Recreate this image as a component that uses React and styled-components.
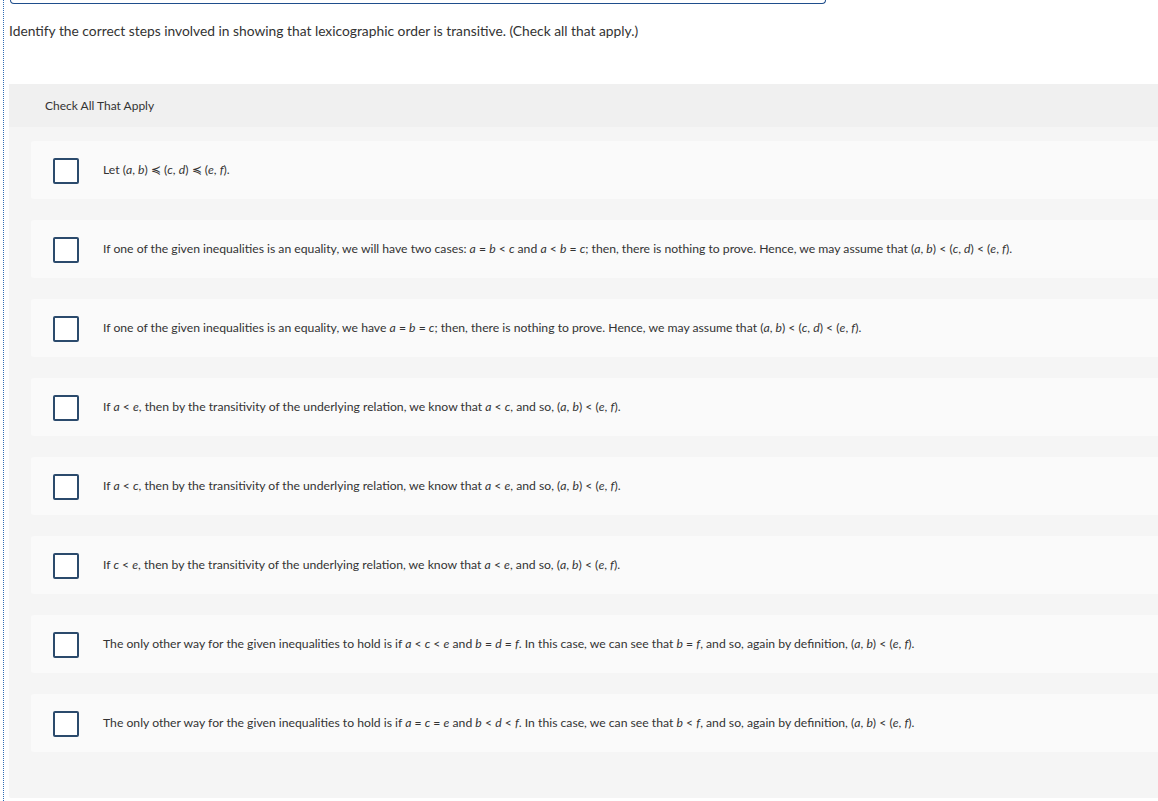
import styled, { createGlobalStyle } from 'styled-components';

const GlobalStyle = createGlobalStyle`
  html, body {
    margin: 0;
    padding: 0;
    background: #fff;
    overflow: hidden;
  }
  body {
    font-family: Lato, 'Open Sans', 'Liberation Sans', sans-serif;
    color: #333;
  }
`;

const V = styled.i`
  font-style: italic;
`;

const options = [
  <>Let (<V>a</V>, <V>b</V>) ≼ (<V>c</V>, <V>d</V>) ≼ (<V>e</V>, <V>f</V>).</>,
  <>
    If one of the given inequalities is an equality, we will have two cases: <V>a</V> = <V>b</V> &lt; <V>c</V> and{' '}
    <V>a</V> &lt; <V>b</V> = <V>c</V>; then, there is nothing to prove. Hence, we may assume that (<V>a</V>, <V>b</V>) &lt; (
    <V>c</V>, <V>d</V>) &lt; (<V>e</V>, <V>f</V>).
  </>,
  <>
    If one of the given inequalities is an equality, we have <V>a</V> = <V>b</V> = <V>c</V>; then, there is nothing to
    prove. Hence, we may assume that (<V>a</V>, <V>b</V>) &lt; (<V>c</V>, <V>d</V>) &lt; (<V>e</V>, <V>f</V>).
  </>,
  <>
    If <V>a</V> &lt; <V>e</V>, then by the transitivity of the underlying relation, we know that <V>a</V> &lt; <V>c</V>,
    and so, (<V>a</V>, <V>b</V>) &lt; (<V>e</V>, <V>f</V>).
  </>,
  <>
    If <V>a</V> &lt; <V>c</V>, then by the transitivity of the underlying relation, we know that <V>a</V> &lt; <V>e</V>,
    and so, (<V>a</V>, <V>b</V>) &lt; (<V>e</V>, <V>f</V>).
  </>,
  <>
    If <V>c</V> &lt; <V>e</V>, then by the transitivity of the underlying relation, we know that <V>a</V> &lt; <V>e</V>,
    and so, (<V>a</V>, <V>b</V>) &lt; (<V>e</V>, <V>f</V>).
  </>,
  <>
    The only other way for the given inequalities to hold is if <V>a</V> &lt; <V>c</V> &lt; <V>e</V> and <V>b</V> ={' '}
    <V>d</V> = <V>f</V>. In this case, we can see that <V>b</V> = <V>f</V>, and so, again by definition, (<V>a</V>,{' '}
    <V>b</V>) &lt; (<V>e</V>, <V>f</V>).
  </>,
  <>
    The only other way for the given inequalities to hold is if <V>a</V> = <V>c</V> = <V>e</V> and <V>b</V> &lt;{' '}
    <V>d</V> &lt; <V>f</V>. In this case, we can see that <V>b</V> &lt; <V>f</V>, and so, again by definition, (
    <V>a</V>, <V>b</V>) &lt; (<V>e</V>, <V>f</V>).
  </>,
];

export default function App() {
  return (
    <>
      <GlobalStyle />
      <Page>
        <TopBox />
        <Question>
          Identify the correct steps involved in showing that lexicographic order is transitive. (Check all that apply.)
        </Question>
        <Panel>
          <PanelHeader>Check All That Apply</PanelHeader>
          <OptionList>
            {options.map((text, i) => (
              <Option key={i}>
                <Box type="checkbox" />
                <OptionText>{text}</OptionText>
              </Option>
            ))}
          </OptionList>
        </Panel>
      </Page>
    </>
  );
}

const Page = styled.div`
  margin-left: 3px;
  padding-left: 5px;
  border-left: 1px dotted #2f6db5;
  min-height: 801px;
  box-sizing: border-box;
`;

const TopBox = styled.div`
  width: 814px;
  height: 3px;
  margin-left: 1px;
  border: 1.5px solid #1f4e8c;
  border-top: none;
  border-radius: 0 0 6px 6px;
`;

const Question = styled.p`
  margin: 17px 0 0 0;
  font-size: 13.8px;
  line-height: 20px;
  color: #333;
`;

const Panel = styled.section`
  margin-top: 43px;
  background: #f5f5f5;
  padding-bottom: 46px;
  border-radius: 2px 0 0 2px;
`;

const PanelHeader = styled.div`
  height: 43px;
  display: flex;
  align-items: center;
  padding-left: 36px;
  background: #f0f0f0;
  font-size: 12px;
  color: #333;
`;

const OptionList = styled.div`
  display: flex;
  flex-direction: column;
  gap: 21px;
  padding: 14px 0 0 22px;
`;

const Option = styled.label`
  display: flex;
  align-items: center;
  height: 58px;
  padding-left: 22px;
  gap: 24px;
  background: #fafafa;
  border-radius: 3px 0 0 3px;
`;

const Box = styled.input`
  appearance: none;
  margin: 1px 0 0 0;
  width: 26px;
  height: 26px;
  flex: none;
  box-sizing: border-box;
  background: #fff;
  border: 2px solid #2b4a6c;
  border-radius: 2px;
`;

const OptionText = styled.span`
  font-size: 12.2px;
  line-height: 16px;
  color: #333;
`;
